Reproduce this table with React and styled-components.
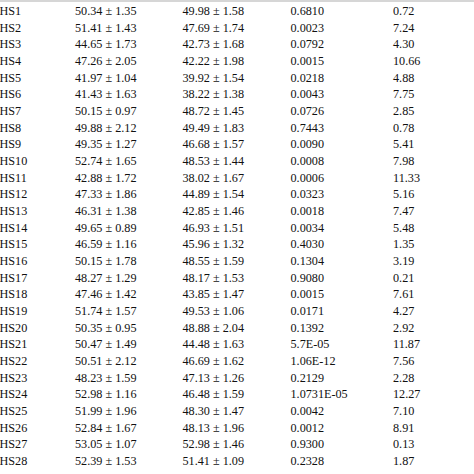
import React from "react";
import styled, { createGlobalStyle } from "styled-components";

const Global = createGlobalStyle`
  html, body { margin: 0; padding: 0; background: #fff; }
  body { width: 474px; height: 474px; overflow: hidden; }
`;

const Page = styled.div`
  width: 474px;
  height: 474px;
  overflow: hidden;
  background: #ffffff;
  font-family: "Liberation Serif", "Times New Roman", serif;
  font-size: 12.2px;
  color: #111111;
`;

const TopRule = styled.div`
  height: 2px;
  background: #d6d6d6;
`;

const Table = styled.div`
  display: grid;
  grid-template-columns: 75px 107.5px 108px 102.5px 1fr;
  grid-auto-rows: 16.68px;
  padding-top: 0.6px;
`;

const Cell = styled.div`
  display: flex;
  align-items: center;
  white-space: nowrap;
  line-height: 1;
  margin-left: ${(p) => (p.$first ? "-0.5px" : "0")};
`;

const rows = [
  ["HS1", "50.34 ± 1.35", "49.98 ± 1.58", "0.6810", "0.72"],
  ["HS2", "51.41 ± 1.43", "47.69 ± 1.74", "0.0023", "7.24"],
  ["HS3", "44.65 ± 1.73", "42.73 ± 1.68", "0.0792", "4.30"],
  ["HS4", "47.26 ± 2.05", "42.22 ± 1.98", "0.0015", "10.66"],
  ["HS5", "41.97 ± 1.04", "39.92 ± 1.54", "0.0218", "4.88"],
  ["HS6", "41.43 ± 1.63", "38.22 ± 1.38", "0.0043", "7.75"],
  ["HS7", "50.15 ± 0.97", "48.72 ± 1.45", "0.0726", "2.85"],
  ["HS8", "49.88 ± 2.12", "49.49 ± 1.83", "0.7443", "0.78"],
  ["HS9", "49.35 ± 1.27", "46.68 ± 1.57", "0.0090", "5.41"],
  ["HS10", "52.74 ± 1.65", "48.53 ± 1.44", "0.0008", "7.98"],
  ["HS11", "42.88 ± 1.72", "38.02 ± 1.67", "0.0006", "11.33"],
  ["HS12", "47.33 ± 1.86", "44.89 ± 1.54", "0.0323", "5.16"],
  ["HS13", "46.31 ± 1.38", "42.85 ± 1.46", "0.0018", "7.47"],
  ["HS14", "49.65 ± 0.89", "46.93 ± 1.51", "0.0034", "5.48"],
  ["HS15", "46.59 ± 1.16", "45.96 ± 1.32", "0.4030", "1.35"],
  ["HS16", "50.15 ± 1.78", "48.55 ± 1.59", "0.1304", "3.19"],
  ["HS17", "48.27 ± 1.29", "48.17 ± 1.53", "0.9080", "0.21"],
  ["HS18", "47.46 ± 1.42", "43.85 ± 1.47", "0.0015", "7.61"],
  ["HS19", "51.74 ± 1.57", "49.53 ± 1.06", "0.0171", "4.27"],
  ["HS20", "50.35 ± 0.95", "48.88 ± 2.04", "0.1392", "2.92"],
  ["HS21", "50.47 ± 1.49", "44.48 ± 1.63", "5.7E-05", "11.87"],
  ["HS22", "50.51 ± 2.12", "46.69 ± 1.62", "1.06E-12", "7.56"],
  ["HS23", "48.23 ± 1.59", "47.13 ± 1.26", "0.2129", "2.28"],
  ["HS24", "52.98 ± 1.16", "46.48 ± 1.59", "1.0731E-05", "12.27"],
  ["HS25", "51.99 ± 1.96", "48.30 ± 1.47", "0.0042", "7.10"],
  ["HS26", "52.84 ± 1.67", "48.13 ± 1.96", "0.0012", "8.91"],
  ["HS27", "53.05 ± 1.07", "52.98 ± 1.46", "0.9300", "0.13"],
  ["HS28", "52.39 ± 1.53", "51.41 ± 1.09", "0.2328", "1.87"],
];

export default function App() {
  return (
    <Page>
      <Global />
      <TopRule />
      <Table>
        {rows.map((r) =>
          r.map((c, i) => (
            <Cell key={r[0] + i} $first={i === 0}>
              {c}
            </Cell>
          ))
        )}
      </Table>
    </Page>
  );
}
